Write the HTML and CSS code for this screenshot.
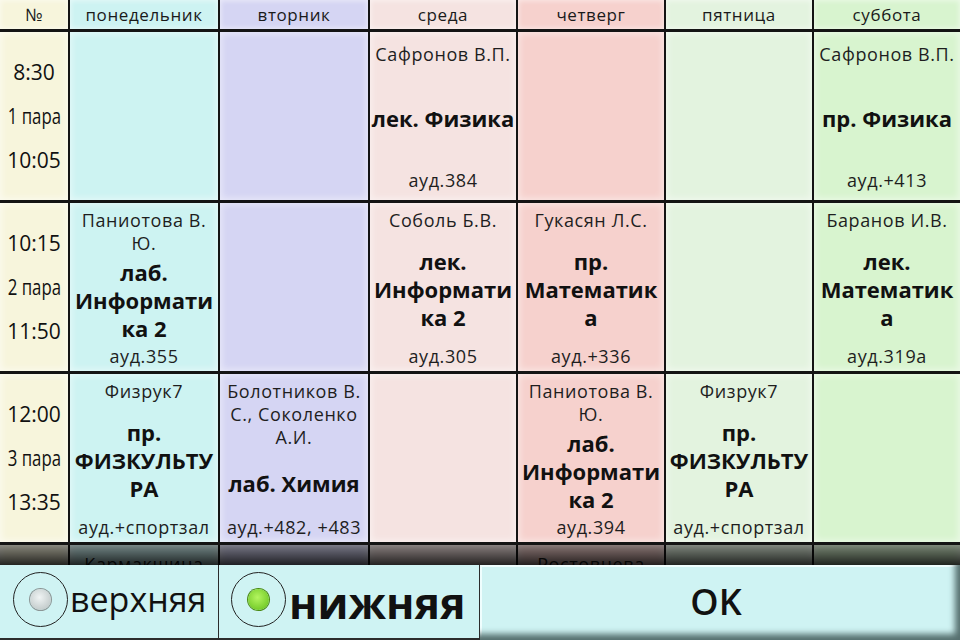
FILE: index.html
```html
<!DOCTYPE html>
<html lang="ru">
<head>
  <meta charset="UTF-8">
  <meta name="viewport" content="width=device-width, initial-scale=1.0">
  <title>Расписание</title>
  <link rel="stylesheet" href="styles.css">
</head>
<body>
<div class="screen">
  <!-- Timetable -->
  <div class="timetable">
    <div class="grid">
      <div class="head num">№</div>
      <div class="head mon">понедельник</div>
      <div class="head tue">вторник</div>
      <div class="head wed">среда</div>
      <div class="head thu">четверг</div>
      <div class="head fri">пятница</div>
      <div class="head sat">суббота</div>

      <!-- 1 пара -->
      <div class="time"><span>8:30</span><span class="para">1 пара</span><span>10:05</span></div>
      <div class="cell first mon"></div>
      <div class="cell first tue"></div>
      <div class="cell first wed">
        <div class="who">Сафронов В.П.</div>
        <div class="subj">лек. Физика</div>
        <div class="room">ауд.384</div>
      </div>
      <div class="cell first thu"></div>
      <div class="cell first fri"></div>
      <div class="cell first sat">
        <div class="who">Сафронов В.П.</div>
        <div class="subj">пр. Физика</div>
        <div class="room">ауд.+413</div>
      </div>

      <!-- 2 пара -->
      <div class="time"><span>10:15</span><span class="para">2 пара</span><span>11:50</span></div>
      <div class="cell mon">
        <div class="who">Паниотова В. Ю.</div>
        <div class="subj">лаб. Информатика 2</div>
        <div class="room">ауд.355</div>
      </div>
      <div class="cell tue"></div>
      <div class="cell wed">
        <div class="who">Соболь Б.В.</div>
        <div class="subj">лек. Информатика 2</div>
        <div class="room">ауд.305</div>
      </div>
      <div class="cell thu">
        <div class="who">Гукасян Л.С.</div>
        <div class="subj">пр. Математика</div>
        <div class="room">ауд.+336</div>
      </div>
      <div class="cell fri"></div>
      <div class="cell sat">
        <div class="who">Баранов И.В.</div>
        <div class="subj">лек. Математика</div>
        <div class="room">ауд.319а</div>
      </div>

      <!-- 3 пара -->
      <div class="time"><span>12:00</span><span class="para">3 пара</span><span>13:35</span></div>
      <div class="cell mon">
        <div class="who">Физрук7</div>
        <div class="subj">пр. ФИЗКУЛЬТУРА</div>
        <div class="room">ауд.+спортзал</div>
      </div>
      <div class="cell tue">
        <div class="who">Болотников В. С., Соколенко А.И.</div>
        <div class="subj">лаб. Химия</div>
        <div class="room">ауд.+482, +483</div>
      </div>
      <div class="cell wed"></div>
      <div class="cell thu">
        <div class="who">Паниотова В. Ю.</div>
        <div class="subj">лаб. Информатика 2</div>
        <div class="room">ауд.394</div>
      </div>
      <div class="cell fri">
        <div class="who">Физрук7</div>
        <div class="subj">пр. ФИЗКУЛЬТУРА</div>
        <div class="room">ауд.+спортзал</div>
      </div>
      <div class="cell sat"></div>

      <!-- 4 пара (under the bar) -->
      <div class="time"></div>
      <div class="cell mon"><div class="who low">Кармакшина</div></div>
      <div class="cell tue"></div>
      <div class="cell wed"></div>
      <div class="cell thu"><div class="who low">Ростовцева</div></div>
      <div class="cell fri"></div>
      <div class="cell sat"></div>
    </div>
    <div class="fade"></div>
  </div>

  <!-- Week switch -->
  <div class="bar">
    <div class="week">
      <span class="radio"><span class="dot"></span></span>
      <span class="label">верхняя</span>
    </div>
    <div class="week active">
      <span class="radio"><span class="dot"></span></span>
      <span class="label">нижняя</span>
    </div>
    <div class="ok">OK</div>
  </div>
</div>
</body>
</html>
```

FILE: styles.css
```css
body {
  margin: 0;
  background-color: #000;
  font-family: "Open Sans", "DejaVu Sans", sans-serif;
  color: #1c1c1c;
}

.screen {
  width: 960px;
  height: 640px;
  display: flex;
  flex-direction: column;
  overflow: hidden;
}

/* Timetable */
.timetable {
  position: relative;
  height: 565px;
  overflow: hidden;
  background-color: #141414;
}
.grid {
  display: grid;
  grid-template-columns: 68px 148px 148px 146px 146px 146px 146px;
  grid-template-rows: 29px repeat(4, 168px);
  gap: 3px 2px;
}

.num { background-color: #f7f5dc; }
.mon { background-color: #cdf3f2; }
.tue { background-color: #d5d5f3; }
.wed { background-color: #f5e3e1; }
.thu { background-color: #f6d1cd; }
.fri { background-color: #e3f3df; }
.sat { background-color: #d8f4cf; }

.head {
  display: flex;
  align-items: center;
  justify-content: center;
  font-size: 17px;
  letter-spacing: 0.6px;
  color: #1a1a1a;
  box-shadow: inset 0 0 5px 1px rgba(255, 255, 255, 0.5);
}

.time {
  background-color: #f7f5dc;
  display: flex;
  flex-direction: column;
  align-items: center;
  justify-content: center;
  gap: 21px;
  font-size: 21px;
  line-height: 23px;
  color: #111;
  box-shadow: inset 0 0 6px 2px rgba(255, 255, 255, 0.5);
}
.time .para {
  transform: scaleX(0.8);
}

.cell {
  display: flex;
  flex-direction: column;
  padding: 6px 1px 3px;
  text-align: center;
  overflow-wrap: anywhere;
  box-shadow: inset 0 0 6px 2px rgba(255, 255, 255, 0.45);
}
.cell.first {
  padding: 11px 1px 8px;
}
.who, .room {
  font-size: 18px;
  line-height: 23px;
  letter-spacing: 0.6px;
  color: #1e1e1e;
}
.subj {
  flex: 1;
  display: flex;
  align-items: center;
  justify-content: center;
  font-size: 22px;
  line-height: 28px;
  font-weight: 700;
  color: #111;
}
.who.low {
  margin-top: 2px;
}

.fade {
  position: absolute;
  left: 0;
  right: 0;
  bottom: 0;
  height: 20px;
  background: linear-gradient(rgba(0, 0, 0, 0.45), rgba(0, 0, 0, 0.85));
}

/* Bottom bar */
.bar {
  height: 75px;
  display: grid;
  grid-template-columns: 218px 260px 1fr;
  column-gap: 1px;
  background-color: #2c2c2c;
}
.week {
  display: flex;
  align-items: center;
  gap: 2px;
  padding: 0 0 5px 13px;
  margin-bottom: 2px;
  background-color: #cff3f3;
}
.week.active {
  padding-left: 12px;
  gap: 3px;
}
.radio {
  flex: none;
  width: 53px;
  height: 53px;
  border: 1.5px solid #222;
  border-radius: 50%;
  display: flex;
  align-items: center;
  justify-content: center;
}
.dot {
  width: 21px;
  height: 21px;
  border-radius: 50%;
  background: radial-gradient(circle at 45% 40%, #f0f4f4, #b4bebe);
  box-shadow: 0 0 0 1px #8c9696;
}
.active .dot {
  background: radial-gradient(circle at 45% 40%, #b4f560, #5fbd16);
  box-shadow: 0 0 0 1px #4b8a15;
}
.label {
  font-size: 34px;
  color: #111;
}
.active .label {
  font-size: 43px;
  font-weight: 700;
  margin-top: 6px;
}

.ok {
  display: flex;
  align-items: center;
  justify-content: center;
  padding: 4px 8px 6px 0;
  background-color: #cff3f3;
  font-size: 36px;
  font-weight: 600;
  color: #111;
  box-shadow: inset -8px -9px 6px -3px #56706f, inset 2px 2px 0 #effefe;
}
```
